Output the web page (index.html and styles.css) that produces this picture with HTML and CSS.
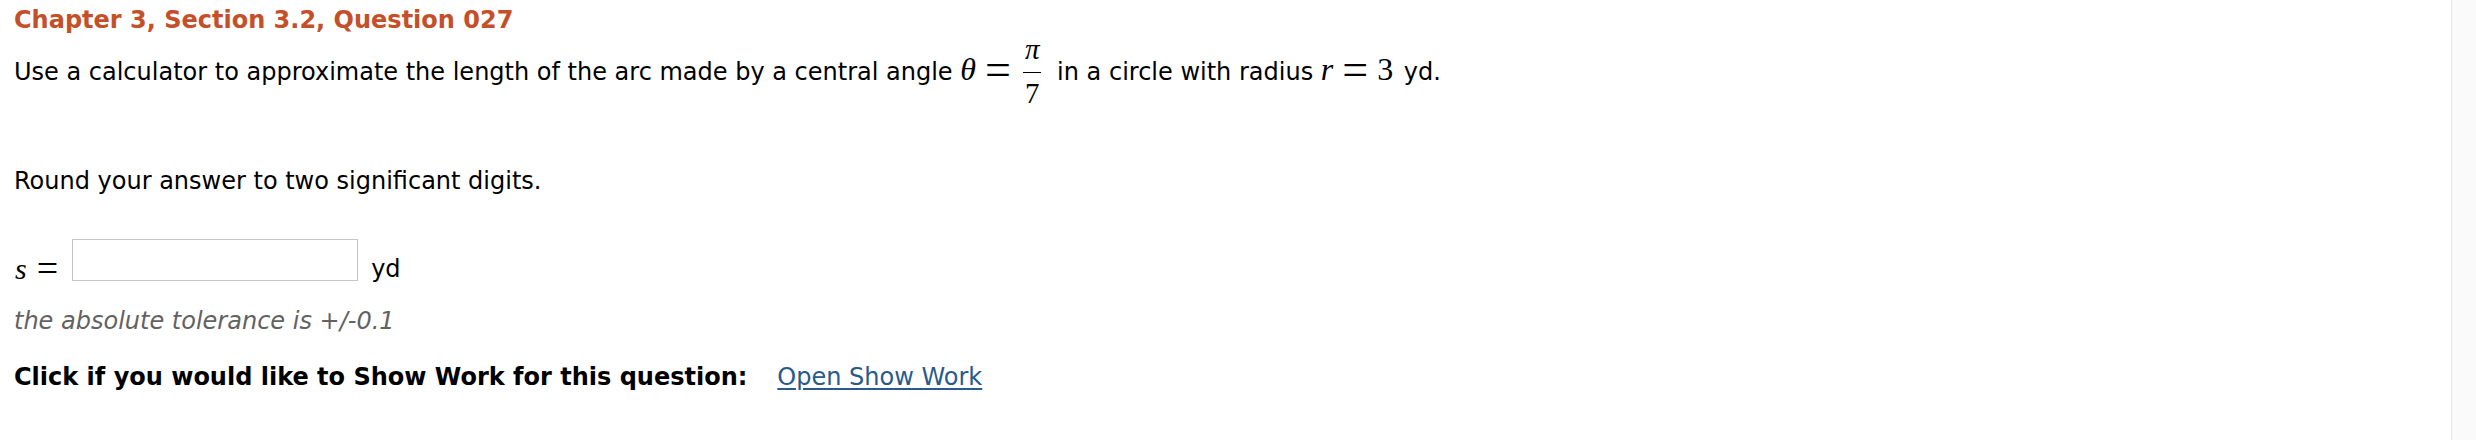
FILE: index.html
```html
<!DOCTYPE html>
<html>
<head>
<meta charset="utf-8">
<link rel="stylesheet" href="styles.css">
</head>
<body>
<div class="page">
  <div class="content">
    <h1 class="title">Chapter 3, Section 3.2, Question 027</h1>
    <p class="q">Use a calculator to approximate the length of the arc made by a central angle <span class="m"><i>θ</i><span class="eq">=</span><span class="frac"><span class="num"><i>π</i></span><span class="bar"></span><span class="den">7</span></span></span> in a circle with radius <span class="m m2"><i>r</i><span class="eq">=</span>3</span> yd.</p>
    <p class="round">Round your answer to two significant digits.</p>
    <div class="answer">
      <span class="am"><i>s</i><span class="eq2">=</span></span>
      <input class="box" type="text">
      <span class="unit">yd</span>
    </div>
    <p class="tol">the absolute tolerance is +/-0.1</p>
    <p class="show"><b>Click if you would like to Show Work for this question:</b><a class="link" href="#">Open Show Work</a></p>
  </div>
  <div class="scroll"></div>
</div>
</body>
</html>
```
FILE: styles.css
```css
html, body {
  margin: 0;
  padding: 0;
  background: #fff;
}
body {
  font-family: "DejaVu Sans", Verdana, sans-serif;
  font-size: 24px;
  color: #000;
}
.page {
  display: flex;
  height: 440px;
  overflow: hidden;
}
.content {
  flex: 1;
  padding-left: 14px;
}
.scroll {
  width: 24px;
  border-left: 1px solid #e4e4e4;
  background: #fafafa;
}
.title {
  margin: 0;
  padding-top: 5px;
  font-size: 24px;
  line-height: 30px;
  font-weight: bold;
  color: #c4502a;
}
.q {
  margin: 2px 0 0;
  line-height: 30px;
}
.m {
  font-family: "Liberation Serif", "Times New Roman", serif;
  font-size: 32px;
  line-height: 30px;
}
.m2 {
  margin-right: 3px;
}
.m i {
  font-style: italic;
}
.eq {
  font-family: "Liberation Serif", "Times New Roman", serif;
  font-size: 46px;
  vertical-align: -5px;
  margin: 0 9px;
}
.frac {
  display: inline-block;
  vertical-align: -23px;
  text-align: center;
  font-size: 29px;
  margin: 0 8px 0 3px;
}
.num, .den {
  display: block;
  line-height: 24px;
  padding: 0 2px;
}
.num {
  padding-bottom: 11px;
}
.den {
  padding-top: 8px;
}
.bar {
  display: block;
  height: 0;
  border-top: 1.5px solid #000;
}
.round {
  margin: 61px 0 0;
  line-height: 30px;
}
.answer {
  margin-top: 43px;
  display: flex;
  align-items: flex-end;
  height: 42px;
}
.am {
  font-family: "Liberation Serif", "Times New Roman", serif;
  font-size: 30px;
  line-height: 24px;
  padding-left: 1px;
}
.eq2 {
  font-family: "Liberation Serif", "Times New Roman", serif;
  font-size: 38px;
  margin-left: 10px;
  vertical-align: -2px;
}
.box {
  box-sizing: border-box;
  width: 286px;
  height: 42px;
  margin: 0 0 0 14px;
  border: 1px solid #c4c4c4;
  padding: 0 6px;
  font: inherit;
  background: #fff;
  outline: none;
}
.unit {
  line-height: 24px;
  margin-left: 13px;
}
.tol {
  margin: 25px 0 0;
  line-height: 30px;
  font-style: italic;
  color: #626262;
}
.show {
  margin: 26px 0 0;
  line-height: 30px;
}
.show b {
  font-weight: bold;
}
.link {
  margin-left: 30px;
  color: #285a8c;
  text-decoration: underline;
  text-underline-offset: 3px;
}
```
